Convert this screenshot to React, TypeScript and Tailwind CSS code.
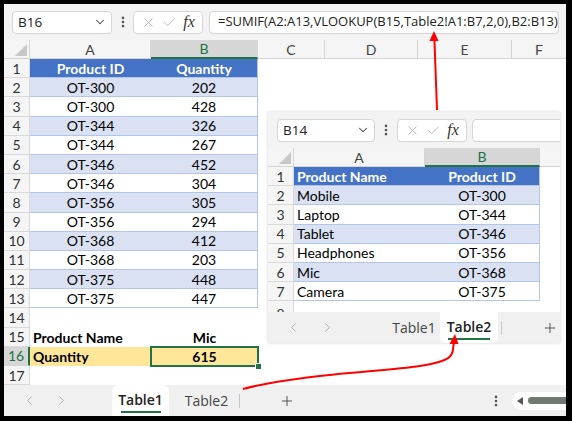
import { Check, ChevronDown, ChevronLeft, ChevronRight, EllipsisVertical, Plus, X } from 'lucide-react';

const ids = ['OT-300', 'OT-300', 'OT-344', 'OT-344', 'OT-346', 'OT-346', 'OT-356', 'OT-356', 'OT-368', 'OT-368', 'OT-375', 'OT-375'];
const qty = [202, 428, 326, 267, 452, 304, 305, 294, 412, 203, 448, 447];

const products = [
  ['Mobile', 'OT-300'],
  ['Laptop', 'OT-344'],
  ['Tablet', 'OT-346'],
  ['Headphones', 'OT-356'],
  ['Mic', 'OT-368'],
  ['Camera', 'OT-375'],
];

function FxBox() {
  return (
    <div className="flex h-[23px] w-[70px] shrink-0 items-center justify-around rounded-[4px] border border-[#d6d6d6] bg-white px-[4px]">
      <X className="h-[15px] w-[15px] text-[#b8b8b8]" strokeWidth={1.5} />
      <Check className="h-[15px] w-[15px] text-[#b8b8b8]" strokeWidth={1.5} />
      <span className="font-['Liberation_Serif',serif] text-[16px] italic leading-none text-[#333]">fx</span>
    </div>
  );
}

function NameBox({ name, wide }: { name: string; wide: boolean }) {
  return (
    <div
      className={
        wide
          ? 'flex h-[23px] w-[100px] shrink-0 items-center justify-between rounded-[4px] border border-[#d6d6d6] bg-white pl-[5px] pr-[4px]'
          : 'flex h-[23px] w-[98px] shrink-0 items-center justify-between rounded-[4px] border border-[#d6d6d6] bg-white pl-[5px] pr-[4px]'
      }
    >
      <span className="text-[13.5px] text-[#222]">{name}</span>
      <ChevronDown className="h-[14px] w-[14px] text-[#444]" strokeWidth={1.75} />
    </div>
  );
}

function ColHeader({ label, selected, last }: { label: string; selected?: boolean; last?: boolean }) {
  if (selected) {
    return (
      <div className="flex items-center justify-center border-b-2 border-r border-b-[#217346] border-r-[#d4d4d4] bg-[#d6d6d6] text-[14px] text-[#217346]">
        {label}
      </div>
    );
  }
  return (
    <div
      className={
        last
          ? 'flex items-center justify-center border-b border-[#d4d4d4] bg-[#f5f5f5] text-[14px] text-[#444]'
          : 'flex items-center justify-center border-b border-r border-[#d4d4d4] bg-[#f5f5f5] text-[14px] text-[#444]'
      }
    >
      {label}
    </div>
  );
}

function Corner() {
  return (
    <div className="relative border-b border-r border-[#d4d4d4] bg-[#f5f5f5]">
      <svg className="absolute bottom-[2px] right-[2px]" width="12" height="12" viewBox="0 0 12 12">
        <polygon points="12,0 12,12 0,12" fill="#c8c8c8" />
      </svg>
    </div>
  );
}

function RowNum({ n, selected }: { n: number; selected?: boolean }) {
  return (
    <div
      className={
        selected
          ? 'flex items-center justify-center border-b border-r-2 border-b-[#d4d4d4] border-r-[#217346] bg-[#d6d6d6] text-[14px] text-[#217346]'
          : 'flex items-center justify-center border-b border-r border-[#d9d9d9] bg-[#f5f5f5] text-[14px] text-[#333]'
      }
    >
      {n}
    </div>
  );
}

function MainSheet() {
  const rows = [];
  for (let r = 1; r <= 17; r++) {
    let a: React.ReactNode = null;
    let b: React.ReactNode = null;
    if (r === 1) {
      a = <div className="flex items-center justify-center border-b border-[#b4c6e7] bg-[#4472c4] font-bold text-white">Product ID</div>;
      b = <div className="flex items-center justify-center border-b border-r border-[#b4c6e7] bg-[#4472c4] font-bold text-white">Quantity</div>;
    } else if (r <= 13) {
      const band = r % 2 === 0;
      a = (
        <div className={band ? 'flex items-center justify-center border-b border-[#b4c6e7] bg-[#d9e1f2]' : 'flex items-center justify-center border-b border-[#b4c6e7] bg-white'}>
          {ids[r - 2]}
        </div>
      );
      b = (
        <div className={band ? 'flex items-center justify-center border-b border-r border-[#b4c6e7] bg-[#d9e1f2]' : 'flex items-center justify-center border-b border-r border-[#b4c6e7] bg-white'}>
          {qty[r - 2]}
        </div>
      );
    } else if (r === 15) {
      a = <div className="flex items-center pl-[3px] font-bold">Product Name</div>;
      b = <div className="flex items-center justify-center font-bold">Mic</div>;
    } else if (r === 16) {
      a = <div className="flex items-center bg-[#ffe699] pl-[3px] font-bold">Quantity</div>;
      b = (
        <div className="relative flex items-center justify-center bg-[#ffe699] font-bold outline-2 -outline-offset-1 outline-[#217346]">
          615
          <span className="absolute -bottom-[4px] -right-[4px] h-[7px] w-[7px] border border-white bg-[#217346]" />
        </div>
      );
    } else {
      a = <div />;
      b = <div />;
    }
    rows.push(
      <div key={r} className="contents">
        <RowNum n={r} selected={r === 16} />
        {a}
        {b}
        <div />
        <div />
        <div />
        <div />
      </div>,
    );
  }
  return (
    <div className="grid grid-cols-[26px_121px_107px_67px_93px_94px_54px] grid-rows-[19px_repeat(17,19.2px)] font-['Lato',sans-serif] text-[14px] text-black">
      <Corner />
      <ColHeader label="A" />
      <ColHeader label="B" selected />
      <ColHeader label="C" />
      <ColHeader label="D" />
      <ColHeader label="E" />
      <ColHeader label="F" last />
      {rows}
    </div>
  );
}

function OverlaySheet() {
  const rows = [];
  for (let r = 1; r <= 7; r++) {
    let a: React.ReactNode;
    let b: React.ReactNode;
    if (r === 1) {
      a = <div className="flex items-center border-b border-[#b4c6e7] bg-[#4472c4] pl-[3px] font-bold text-white">Product Name</div>;
      b = <div className="flex items-center justify-center border-b border-r border-[#b4c6e7] bg-[#4472c4] font-bold text-white">Product ID</div>;
    } else {
      const band = r % 2 === 0;
      const [name, id] = products[r - 2];
      a = (
        <div className={band ? 'flex items-center border-b border-[#b4c6e7] bg-[#d9e1f2] pl-[3px]' : 'flex items-center border-b border-[#b4c6e7] bg-white pl-[3px]'}>
          {name}
        </div>
      );
      b = (
        <div className={band ? 'flex items-center justify-center border-b border-r border-[#b4c6e7] bg-[#d9e1f2]' : 'flex items-center justify-center border-b border-r border-[#b4c6e7] bg-white'}>
          {id}
        </div>
      );
    }
    rows.push(
      <div key={r} className="contents">
        <RowNum n={r} />
        {a}
        {b}
        <div />
      </div>,
    );
  }
  return (
    <div className="grid grid-cols-[26px_131px_115px_1fr] grid-rows-[19px_repeat(8,19.2px)] font-['Lato',sans-serif] text-[14px] text-black">
      <Corner />
      <ColHeader label="A" />
      <ColHeader label="B" selected />
      <ColHeader label="" last />
      {rows}
      <div className="flex items-start justify-center border-r border-[#d9d9d9] bg-[#f5f5f5] pt-[2px] text-[14px] text-[#333]">8</div>
      <div />
      <div />
      <div />
    </div>
  );
}

function Overlay() {
  return (
    <div className="absolute left-[264px] top-[108px] flex h-[231px] w-[292px] flex-col overflow-hidden bg-white shadow-[0_0_3px_rgba(0,0,0,0.18)]">
      <div className="flex h-[36px] shrink-0 items-center bg-[#f3f3f3] pl-[9px]">
        <NameBox name="B14" wide={false} />
        <div className="flex w-[22px] shrink-0 justify-center">
          <EllipsisVertical className="h-[14px] w-[14px] text-[#555]" strokeWidth={2.5} />
        </div>
        <FxBox />
        <div className="ml-[5px] h-[23px] w-[120px] shrink-0 rounded-[4px] border border-[#d6d6d6] bg-white" />
      </div>
      <div className="h-[164px] shrink-0 overflow-hidden">
        <OverlaySheet />
      </div>
      <div className="flex flex-1 items-center bg-[#f0f0f0] text-[14px] text-[#444]">
        <ChevronLeft className="ml-[18px] h-[15px] w-[15px] text-[#aaa]" strokeWidth={1.5} />
        <ChevronRight className="ml-[19px] h-[15px] w-[15px] text-[#aaa]" strokeWidth={1.5} />
        <div className="ml-[58px] flex w-[42px] justify-center">Table1</div>
        <div className="ml-[5px] flex h-full w-[58px] flex-col items-center justify-center rounded-b-[6px] bg-white">
          <span className="font-semibold text-[#222]">Table2</span>
          <span className="mt-[1px] h-[2px] w-[42px] bg-[#217346]" />
        </div>
        <span className="ml-[3px] h-[14px] w-px bg-[#c8c8c8]" />
        <Plus className="ml-[40px] h-[16px] w-[16px] text-[#555]" strokeWidth={1.5} />
      </div>
    </div>
  );
}

function Arrows() {
  return (
    <svg className="pointer-events-none absolute inset-0" width="572" height="421" viewBox="0 0 572 421">
      <line x1="437" y1="110" x2="434.4" y2="39" stroke="#f00" strokeWidth="2" />
      <polygon points="434,31 429.5,41 438.5,41" fill="#f00" />
      <path d="M243 389 C 300 374, 380 372, 420 366 S 451 352, 454 343" fill="none" stroke="#f00" strokeWidth="2" />
      <polygon points="455,334 449.5,344 458.5,344" fill="#f00" />
    </svg>
  );
}

export default function App() {
  return (
    <div className="relative h-[421px] w-[572px] bg-black pb-[5px] pl-[4px] pr-[6px] pt-[4px] font-['Open_Sans',sans-serif]">
      <div className="relative flex h-full flex-col overflow-hidden bg-white">
        <div className="flex h-[36px] shrink-0 items-center bg-[#f3f3f3] pl-[8px] pr-[8px]">
          <NameBox name="B16" wide />
          <div className="flex w-[21px] shrink-0 justify-center">
            <EllipsisVertical className="h-[14px] w-[14px] text-[#555]" strokeWidth={2.5} />
          </div>
          <FxBox />
          <div className="ml-[6px] flex h-[23px] flex-1 items-center rounded-[4px] border border-[#d6d6d6] bg-white pl-[8px] text-[13px] text-[#222]">
            =SUMIF(A2:A13,VLOOKUP(B15,Table2!A1:B7,2,0),B2:B13)
          </div>
        </div>
        <MainSheet />
        <div className="flex flex-1 items-center bg-[#f0f0f0] text-[14px] text-[#444]">
          <ChevronLeft className="ml-[18px] h-[15px] w-[15px] text-[#aaa]" strokeWidth={1.5} />
          <ChevronRight className="ml-[17px] h-[15px] w-[15px] text-[#aaa]" strokeWidth={1.5} />
          <div className="ml-[43px] flex h-full w-[57px] flex-col items-center justify-center rounded-t-[6px] bg-white">
            <span className="font-semibold text-[#222]">Table1</span>
            <span className="mt-[1px] h-[2px] w-[40px] bg-[#217346]" />
          </div>
          <div className="ml-[5px] flex w-[65px] justify-center">Table2</div>
          <span className="h-[14px] w-px bg-[#c8c8c8]" />
          <Plus className="ml-[39px] h-[16px] w-[16px] text-[#555]" strokeWidth={1.5} />
          <EllipsisVertical className="ml-[194px] h-[14px] w-[14px] text-[#555]" strokeWidth={2.5} />
          <div className="ml-[9px] flex h-[18px] flex-1 items-center rounded-l-full bg-white pl-[4px]">
            <svg width="8" height="8" viewBox="0 0 8 8">
              <polygon points="1,4 7,0 7,8" fill="#555" />
            </svg>
            <span className="ml-[4px] h-[7px] flex-1 rounded-l-full bg-[#6f7a72]" />
          </div>
        </div>
        <Overlay />
      </div>
      <Arrows />
    </div>
  );
}
